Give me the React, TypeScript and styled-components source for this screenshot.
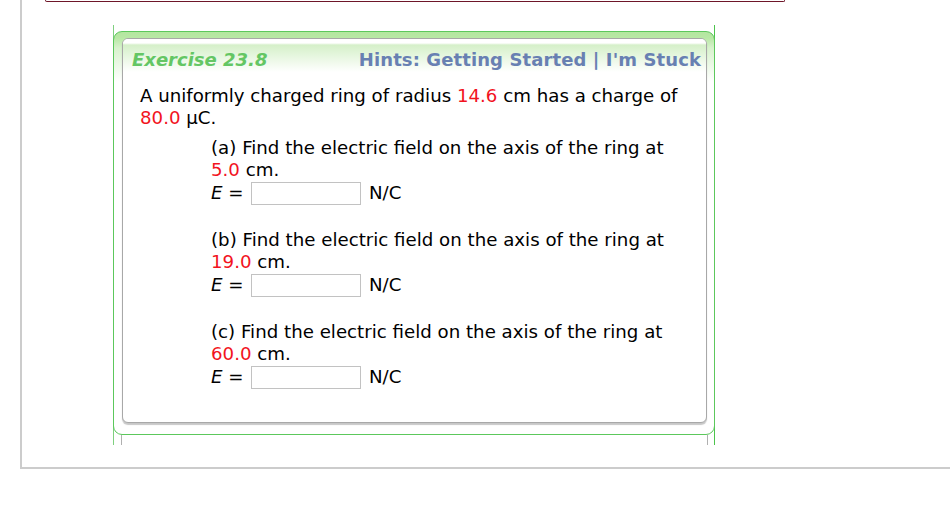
import React from 'react';
import styled, { createGlobalStyle } from 'styled-components';

const GlobalStyle = createGlobalStyle`
  html, body {
    margin: 0;
    padding: 0;
    background: #fff;
    overflow: hidden;
  }
  body {
    font-family: 'DejaVu Sans', Verdana, sans-serif;
  }
`;

const parts = [
  { letter: 'a', distance: '5.0' },
  { letter: 'b', distance: '19.0' },
  { letter: 'c', distance: '60.0' },
];

const App = () => {
  return (
    <>
      <GlobalStyle />
      <PageFrame>
        <TopBar />
        <StubFrame>
          <GreenBox>
            <Card>
              <Header>
                <Title>Exercise 23.8</Title>
                <Hints>Hints: Getting Started | I'm Stuck</Hints>
              </Header>
              <Problem>
                A uniformly charged ring of radius <Num>14.6</Num> cm has a charge of
                <br />
                <Num>80.0</Num> μC.
              </Problem>
              <Parts>
                {parts.map((p) => (
                  <Part key={p.letter}>
                    <Line>({p.letter}) Find the electric field on the axis of the ring at</Line>
                    <Line>
                      <Num>{p.distance}</Num> cm.
                    </Line>
                    <AnswerRow>
                      <EqLabel>
                        <i>E</i> =
                      </EqLabel>
                      <AnswerInput type="text" />
                      <Unit>N/C</Unit>
                    </AnswerRow>
                  </Part>
                ))}
              </Parts>
            </Card>
          </GreenBox>
          <BottomStubs />
        </StubFrame>
      </PageFrame>
    </>
  );
};

const PageFrame = styled.div`
  margin-left: 20px;
  height: 467px;
  border-left: 2px solid #cccccc;
  border-bottom: 2px solid #cccccc;
`;

const TopBar = styled.div`
  margin-left: 23px;
  width: 738px;
  height: 1px;
  border: 1px solid #6e1629;
  border-top: none;
  border-radius: 0 0 3px 3px;
`;

const StubFrame = styled.div`
  margin: 23px 0 0 91px;
  width: 600px;
  padding-top: 6px;
  border-left: 1px solid #7fd07f;
  border-right: 1px solid #4cc44c;
`;

const GreenBox = styled.div`
  margin: 0 -1px;
  padding: 6px 7px 11px 8px;
  border: 1px solid #5cc85c;
  border-radius: 9px;
  background: linear-gradient(
    to bottom,
    #b4e6a0 0px,
    #b8e8a5 6px,
    #d8f2cd 16px,
    #ffffff 50px
  );
`;

const Card = styled.div`
  border: 1px solid #a8a8a8;
  border-radius: 6px;
  background: #fff;
  box-shadow: 0 2px 1px rgba(0, 0, 0, 0.22);
  overflow: hidden;
  padding-bottom: 33px;
`;

const Header = styled.div`
  display: flex;
  justify-content: space-between;
  align-items: center;
  padding: 9px 5px 0 9px;
  line-height: 24px;
  font-size: 18px;
  font-weight: bold;
  background: linear-gradient(
    to bottom,
    #ffffff 0px,
    #ffffff 4px,
    #d5f0c9 6px,
    #ffffff 33px
  );
`;

const Title = styled.span`
  color: #64c664;
  font-style: italic;
`;

const Hints = styled.span`
  color: #6880b2;
  letter-spacing: 0.1px;
`;

const Problem = styled.div`
  margin-top: 13px;
  padding-left: 17px;
  font-size: 18.2px;
  line-height: 22px;
  color: #000;
`;

const Num = styled.span`
  color: #f2141e;
`;

const Parts = styled.div`
  margin-top: 8px;
  padding-left: 88px;
  display: flex;
  flex-direction: column;
  gap: 24px;
`;

const Part = styled.div`
  font-size: 18.2px;
  line-height: 22px;
  color: #000;
`;

const Line = styled.div``;

const AnswerRow = styled.div`
  display: flex;
  align-items: center;
  height: 24px;
`;

const EqLabel = styled.span`
  width: 40px;
  flex: none;
`;

const AnswerInput = styled.input`
  box-sizing: border-box;
  width: 110px;
  height: 23px;
  margin: 0;
  padding: 0 3px;
  border: 1px solid #c2c2c2;
  background: #fff;
  outline: none;
`;

const Unit = styled.span`
  margin-left: 8px;
`;

const BottomStubs = styled.div`
  height: 10px;
  margin: 0 6px 0 7px;
  border-left: 1px solid #b0b0b0;
  border-right: 1px solid #b0b0b0;
`;

export default App;
